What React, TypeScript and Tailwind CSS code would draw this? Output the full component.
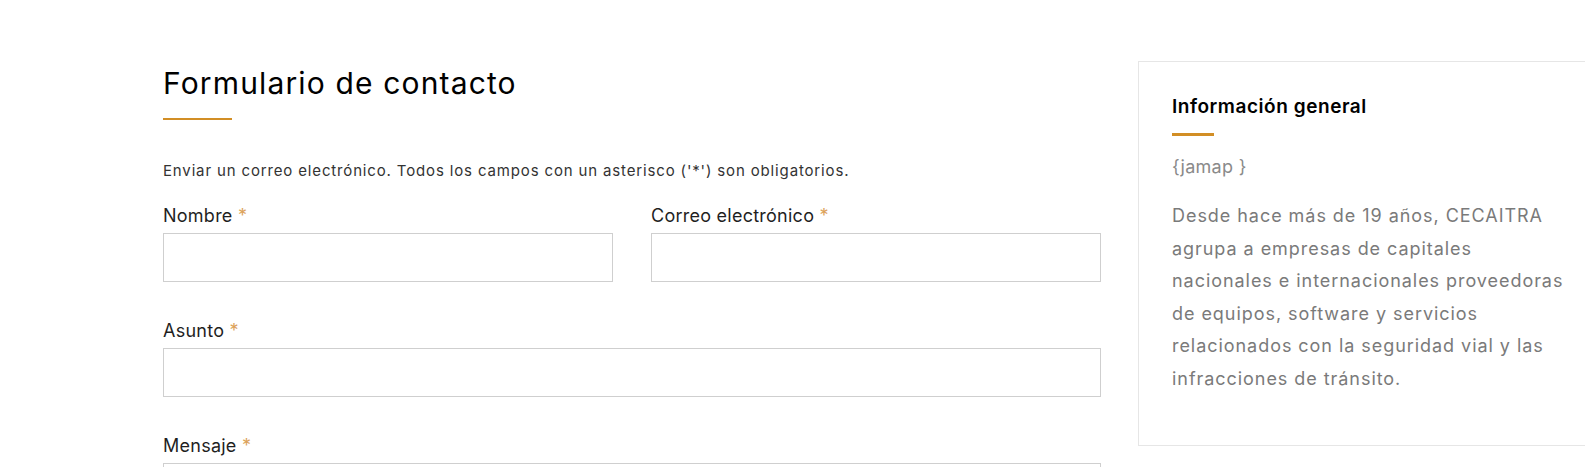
const orange = "bg-[#d28e25]";

function Label({ text }: { text: string }) {
  return (
    <label className="block text-[18px] leading-[24px] tracking-[0.25px] text-[#1f1f1f]">
      {text} <span className="text-[#dca25a]">*</span>
    </label>
  );
}

function Input({ tall }: { tall?: boolean }) {
  return (
    <div
      className={
        "mt-[5px] w-full border border-[#cfcfcf] bg-white " +
        (tall ? "h-[160px]" : "h-[49px]")
      }
    />
  );
}

export default function App() {
  return (
    <div className="h-[467px] overflow-hidden bg-white font-['Inter','Liberation_Sans',sans-serif]">
      <div className="flex gap-[37px] pl-[163px] pt-[61px]">
        <main className="w-[938px] shrink-0">
          <h1 className="mt-[4px] text-[30px] leading-[36px] font-normal tracking-[1.15px] text-black">
            Formulario de contacto
          </h1>
          <div className={"mt-[17px] h-[2px] w-[69px] " + orange} />
          <p className="mt-[39px] text-[15px] leading-[24px] tracking-[0.85px] text-[#333]">
            Enviar un correo electrónico. Todos los campos con un asterisco
            (&#39;*&#39;) son obligatorios.
          </p>

          <div className="mt-[21px] grid grid-cols-2 gap-x-[38px]">
            <div>
              <Label text="Nombre" />
              <Input />
            </div>
            <div>
              <Label text="Correo electrónico" />
              <Input />
            </div>
          </div>

          <div className="mt-[37px]">
            <Label text="Asunto" />
            <Input />
          </div>

          <div className="mt-[37px]">
            <Label text="Mensaje" />
            <Input tall />
          </div>
        </main>

        <aside className="h-[385px] w-[480px] shrink-0 border border-[#e6e6e6] px-[33px] pt-[32px]">
          <h3 className="text-[19px] leading-[26px] font-semibold tracking-[0.55px] text-black">
            Información general
          </h3>
          <div className={"mt-[13px] h-[3px] w-[42px] " + orange} />
          <p className="mt-[17px] text-[18px] leading-[28px] tracking-[0.3px] text-[#8a8a8a]">
            {"{jamap }"}
          </p>
          <p className="mt-[19px] w-[395px] text-[18px] leading-[32.5px] tracking-[0.95px] text-[#7a7a7a]">
            Desde hace más de 19 años, CECAITRA agrupa a empresas de capitales
            nacionales e internacionales proveedoras de equipos, software y
            servicios relacionados con la seguridad vial y las infracciones de
            tránsito.
          </p>
        </aside>
      </div>
    </div>
  );
}
